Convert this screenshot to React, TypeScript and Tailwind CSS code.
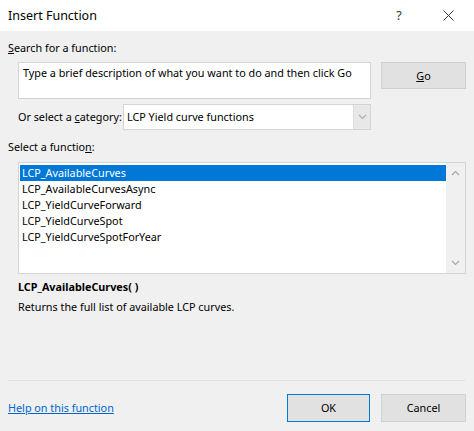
const font = { fontFamily: '"Noto Sans", "Open Sans", sans-serif' };

function ChevronUp() {
  return (
    <svg width="9" height="6" viewBox="0 0 9 6" fill="none">
      <path d="M1 5 L4.5 1.5 L8 5" stroke="#a6a6a6" strokeWidth="1.2" />
    </svg>
  );
}

function ChevronDown({ color = '#a6a6a6' }: { color?: string }) {
  return (
    <svg width="9" height="6" viewBox="0 0 9 6" fill="none">
      <path d="M1 1 L4.5 4.5 L8 1" stroke={color} strokeWidth="1.2" />
    </svg>
  );
}

const functions = [
  'LCP_AvailableCurves',
  'LCP_AvailableCurvesAsync',
  'LCP_YieldCurveForward',
  'LCP_YieldCurveSpot',
  'LCP_YieldCurveSpotForYear',
];

export default function App() {
  return (
    <div className="w-[474px] h-[431px] bg-[#f0f0f0] text-[10.8px] leading-[16px] text-black overflow-hidden" style={font}>
      {/* Title bar */}
      <div className="h-[31px] bg-white flex items-center pl-2">
        <span className="text-[12.5px] flex-1">Insert Function</span>
        <span className="w-[46px] text-center text-[12.5px] text-[#333]">?</span>
        <span className="w-[52px] flex justify-center">
          <svg width="11" height="11" viewBox="0 0 11 11">
            <path d="M0.5 0.5 L10.5 10.5 M10.5 0.5 L0.5 10.5" stroke="#333" strokeWidth="1" />
          </svg>
        </span>
      </div>

      <div className="px-2">
        <div className="pt-[9px]">
          <span className="underline">S</span>earch for a function:
        </div>

        {/* Search row */}
        <div className="mt-[6px] pl-[10px] flex gap-[10px]">
          <div className="w-[353px] h-[37px] bg-white border border-[#d4d4d4] px-[4px] pt-[2px] whitespace-nowrap">
            Type a brief description of what you want to do and then click Go
          </div>
          <button className="w-[85px] h-[27px] bg-[#e1e1e1] border border-[#d0d0d0]">
            <span className="underline">G</span>o
          </button>
        </div>

        {/* Category row */}
        <div className="mt-[5px] pl-[10px] flex items-center">
          <span className="w-[105px] whitespace-nowrap">
            Or select a <span className="underline">c</span>ategory:
          </span>
          <div className="w-[248px] h-[26px] bg-white border border-[#d4d4d4] flex items-center">
            <span className="flex-1 pl-[3px]">LCP Yield curve functions</span>
            <span className="w-[17px] h-full bg-[#e8e8e8] border-l border-[#dcdcdc] flex items-center justify-center">
              <ChevronDown color="#b0b0b0" />
            </span>
          </div>
        </div>

        <div className="mt-[9px]">
          Select a functio<span className="underline">n</span>:
        </div>

        {/* Function list */}
        <div className="mt-[7px] ml-[10px] w-[448px] h-[112px] bg-white border border-[#d4d4d4] flex">
          <div className="flex-1 pt-[2px] pl-[1px]">
            {functions.map((f, i) => (
              <div
                key={f}
                className={i === 0 ? 'h-[16px] bg-[#0078d7] text-white pl-[2px]' : 'h-[16px] pl-[2px]'}
              >
                {f}
              </div>
            ))}
          </div>
          <div className="w-[19px] bg-[#f0f0f0] flex flex-col items-center justify-between py-[7px]">
            <ChevronUp />
            <ChevronDown />
          </div>
        </div>

        <div className="mt-[5px] pl-[10px] font-bold">LCP_AvailableCurves( )</div>
        <div className="mt-[4px] pl-[10px]">Returns the full list of available LCP curves.</div>

        <div className="mt-[65px] h-px bg-[#e3e3e3]"></div>

        {/* Footer */}
        <div className="mt-[13px] flex items-center">
          <a className="flex-1 text-[#0066cc] underline cursor-pointer">Help on this function</a>
          <button className="w-[83px] h-[28px] bg-[#e1e1e1] border border-[#0078d7]">OK</button>
          <button className="ml-[11px] w-[85px] h-[28px] bg-[#e1e1e1] border border-[#d0d0d0]">Cancel</button>
        </div>
      </div>
    </div>
  );
}
